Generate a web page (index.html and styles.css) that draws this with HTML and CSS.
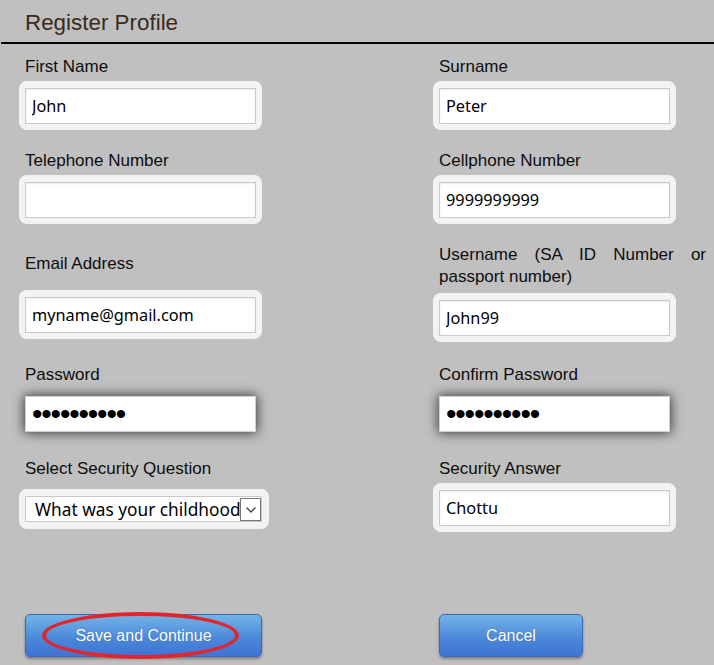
FILE: index.html
```html
<!DOCTYPE html>
<html lang="en">
<head>
<meta charset="utf-8">
<title>Register Profile</title>
<link rel="stylesheet" href="styles.css">
</head>
<body>
<header class="header"><h1 class="title">Register Profile</h1></header>
<form class="form">
  <label class="lbl r1">First Name</label>
  <label class="lbl r1">Surname</label>
  <div class="box"><input class="inp" type="text" value="John"></div>
  <div class="box"><input class="inp" type="text" value="Peter"></div>

  <label class="lbl">Telephone Number</label>
  <label class="lbl">Cellphone Number</label>
  <div class="box"><input class="inp" type="text" value=""></div>
  <div class="box"><input class="inp" type="text" value="9999999999"></div>

  <label class="lbl mid">Email Address</label>
  <label class="lbl just">Username (SA ID Number or passport number)</label>
  <div class="box b3l"><input class="inp" type="text" value="myname@gmail.com"></div>
  <div class="box b3"><input class="inp" type="text" value="John99"></div>

  <label class="lbl r4">Password</label>
  <label class="lbl r4">Confirm Password</label>
  <div class="box plain"><input class="inp pwd" type="password" value="abcdefghij"></div>
  <div class="box plain"><input class="inp pwd" type="password" value="abcdefghij"></div>

  <label class="lbl r5">Select Security Question</label>
  <label class="lbl r5">Security Answer</label>
  <div class="selbox">
    <div class="selwrap">
      <select class="sel"><option>What was your childhood nickname?</option></select>
      <span class="arrow"><svg width="12" height="8" viewBox="0 0 12 8"><path d="M1.5 1.5 L6 6 L10.5 1.5" fill="none" stroke="#444" stroke-width="1.4"/></svg></span>
    </div>
  </div>
  <div class="box"><input class="inp" type="text" value="Chottu"></div>

  <div class="btncell">
    <button type="button" class="btn save">Save and Continue<span class="ring"></span></button>
  </div>
  <div class="btncell">
    <button type="button" class="btn cancel">Cancel</button>
  </div>
</form>
</body>
</html>
```
FILE: styles.css
```css
* { box-sizing: border-box; }
html, body { margin: 0; padding: 0; }
body {
  background: #c0c0c0;
  font-family: "Liberation Sans", Arial, sans-serif;
  width: 714px;
  height: 665px;
  overflow: hidden;
}
.header {
  height: 44px;
  margin-left: 1px;
  border-bottom: 2px solid #000;
  padding: 10px 0 0 24px;
}
.title {
  margin: 0;
  font-size: 22.4px;
  line-height: 25px;
  font-weight: normal;
  color: #3b2a1c;
}
.form {
  display: grid;
  grid-template-columns: 414px 273px;
  padding-left: 19px;
  align-items: start;
}
.lbl {
  display: block;
  padding-left: 6px;
  font-size: 17px;
  line-height: 22px;
  color: #0d0d0d;
  margin-top: 20px;
}
.lbl.r1 { margin-top: 12px; }
.lbl.r4 { margin-top: 22px; }
.lbl.r5 { margin-top: 20px; }
.lbl.mid { margin-top: 29px; }
.lbl.just { text-align: justify; }
.box {
  width: 243px;
  margin-top: 3px;
  padding: 7px 6px 6px;
  background: #f3f3f3;
  border-radius: 8px;
}
.box.b3 { margin-top: 5px; }
.box.b3l { margin-top: 2px; }
.box.plain { background: transparent; }
.inp {
  display: block;
  width: 231px;
  height: 36px;
  margin: 0;
  padding: 0 6px;
  border: 1px solid #c9c9c9;
  background: #fff;
  box-shadow: inset 0 1px 2px rgba(0,0,0,0.08);
  font-family: "Noto Sans", "Open Sans", sans-serif;
  font-size: 16.3px;
  color: #000;
  outline: none;
}
.pwd {
  border-color: #d0d0d0;
  box-shadow: 0 0 12px 1px rgba(0,0,0,0.7);
  font-family: "Liberation Sans", Arial, sans-serif;
  font-size: 30px;
  letter-spacing: -1.2px;
  padding-left: 6px;
}
.selbox {
  width: 250px;
  margin-top: 9px;
  padding: 7px 7px 7px 6px;
  background: #f3f3f3;
  border-radius: 8px;
}
.selwrap {
  position: relative;
  width: 237px;
  height: 26px;
}
.sel {
  display: block;
  width: 237px;
  height: 26px;
  margin: 0;
  padding: 0 20px 0 9px;
  border: 1px solid #c8c8c8;
  background: #fff;
  appearance: none;
  -webkit-appearance: none;
  border-radius: 0;
  font-family: "Noto Sans", "Open Sans", sans-serif;
  font-size: 17.3px;
  color: #000;
  outline: none;
}
.arrow {
  position: absolute;
  right: 1px;
  top: 2px;
  width: 21px;
  height: 23px;
  border: 1px solid #777;
  background: #fff;
  display: flex;
  align-items: center;
  justify-content: center;
}
.btncell {
  margin-top: 82px;
  padding-left: 6px;
}
.btn {
  position: relative;
  display: block;
  height: 43px;
  margin: 0;
  padding: 0;
  border: 1px solid #3c68b6;
  border-radius: 5px;
  background: linear-gradient(#71b4e6, #4a86d9 60%, #3f74d3);
  box-shadow: 0 2px 3px rgba(0,0,0,0.35);
  color: #fff;
  font-family: "Liberation Sans", Arial, sans-serif;
  font-size: 16px;
  text-shadow: 0 0 1px rgba(0,0,0,0.3);
  cursor: pointer;
}
.save { width: 237px; }
.cancel { width: 144px; }
.ring {
  position: absolute;
  left: 16px;
  top: -3px;
  width: 197px;
  height: 47px;
  border: 4px solid #e2252d;
  border-radius: 50%;
  pointer-events: none;
}
```
